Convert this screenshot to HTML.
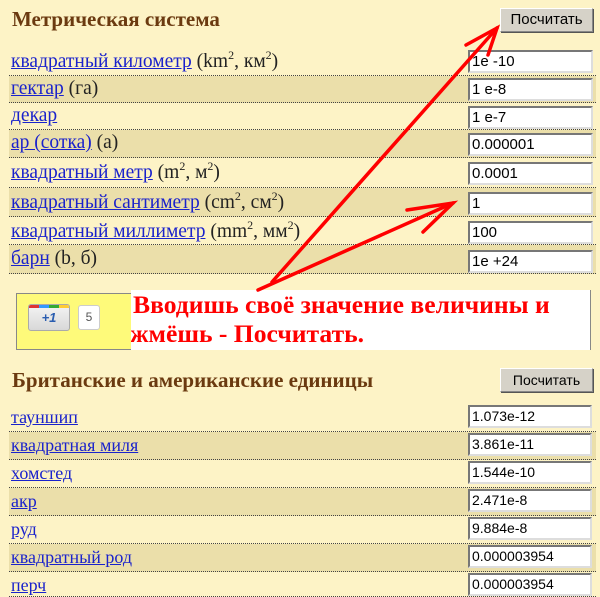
<!DOCTYPE html>
<html><head><meta charset="utf-8"><style>
*{margin:0;padding:0;box-sizing:border-box}
body{width:600px;height:597px;background:#fdf3c6;position:relative;overflow:hidden;font-family:"Liberation Serif","DejaVu Serif",serif}
.abs{position:absolute}
h1{position:absolute;color:#6b3a10;font-weight:bold;font-family:"Liberation Serif","DejaVu Serif",serif;white-space:nowrap}
.btn{position:absolute;background:#d6d2c8;border:1px solid #888;border-top-color:#fff;border-left-color:#fff;box-shadow:1px 1px 0 #555;font:14px "Liberation Sans",sans-serif;color:#000;text-align:center;line-height:22px}
.row{position:absolute;left:9px;width:587px;border-bottom:1px dotted #444}
.row.d{background:#ebdfaa}
.lbl{position:absolute;left:2px;font-size:19.5px;color:#222;white-space:nowrap}
.lbl a{color:#1a22cc;text-decoration:underline}
sup{font-size:12px;vertical-align:8px;line-height:0}
.inp{position:absolute;background:#fff;border:2px solid #777;border-right-color:#ddd;border-bottom-color:#ddd;font:15px "Liberation Sans",sans-serif;padding-left:2px;color:#000;line-height:19px}
.b2 .lbl{font-size:18px;letter-spacing:0}
</style></head><body>
<h1 style="left:12px;top:7px;font-size:21px">Метрическая система</h1>
<div class="btn" style="left:500px;top:8px;width:93px;height:24px;font-size:15px">Посчитать</div>

<div class="row" style="top:48px;height:28px"><div class="lbl" style="top:3px"><a>квадратный километр</a> (km<sup>2</sup>, км<sup>2</sup>)</div></div>
<div class="row d" style="top:76px;height:27px"><div class="lbl" style="top:2px"><a>гектар</a> (га)</div></div>
<div class="row" style="top:103px;height:27px"><div class="lbl" style="top:2px"><a>декар</a></div></div>
<div class="row d" style="top:130px;height:28px"><div class="lbl" style="top:2px"><a>ар (сотка)</a> (а)</div></div>
<div class="row" style="top:158px;height:30px"><div class="lbl" style="top:4px"><a>квадратный метр</a> (m<sup>2</sup>, м<sup>2</sup>)</div></div>
<div class="row d" style="top:188px;height:29px"><div class="lbl" style="top:4px"><a>квадратный сантиметр</a> (cm<sup>2</sup>, см<sup>2</sup>)</div></div>
<div class="row" style="top:217px;height:28px"><div class="lbl" style="top:4px"><a>квадратный миллиметр</a> (mm<sup>2</sup>, мм<sup>2</sup>)</div></div>
<div class="row d" style="top:245px;height:29px"><div class="lbl" style="top:3px"><a>барн</a> (b, б)</div></div>

<div class="inp" style="left:468px;top:50px;width:125px;height:23px">1e -10</div>
<div class="inp" style="left:468px;top:78px;width:125px;height:23px">1 e-8</div>
<div class="inp" style="left:468px;top:106px;width:125px;height:23px">1 e-7</div>
<div class="inp" style="left:468px;top:133px;width:125px;height:23px">0.000001</div>
<div class="inp" style="left:468px;top:162px;width:125px;height:23px">0.0001</div>
<div class="inp" style="left:468px;top:192px;width:125px;height:23px">1</div>
<div class="inp" style="left:468px;top:221px;width:125px;height:23px">100</div>
<div class="inp" style="left:468px;top:250px;width:125px;height:23px">1e +24</div>

<div class="abs" style="left:16px;top:293px;width:116px;height:57px;background:#fefa7a;border:1px solid #888"></div>
<div class="abs" style="left:28px;top:304px;width:42px;height:27px;background:linear-gradient(#f4f4f4,#d8d8d8);border:1px solid #aaa;border-radius:3px;overflow:hidden">
<div style="height:3px;background:linear-gradient(90deg,#d33 0 25%,#39f 25% 50%,#3a3 50% 75%,#fc3 75%)"></div>
<div style="font:bold italic 13px 'Liberation Sans',sans-serif;color:#2a5db0;text-align:center;line-height:20px">+1</div></div>
<div class="abs" style="left:78px;top:305px;width:22px;height:25px;background:#fff;border:1px solid #ccc;border-radius:3px;font:12px 'Liberation Sans',sans-serif;color:#555;text-align:center;line-height:23px">5</div>
<div class="abs" style="left:131px;top:290px;width:460px;height:60px;background:#fff;border-right:1px solid #888;color:#f00;font-weight:bold;font-size:25.6px;line-height:29px;padding-left:2px;white-space:nowrap;overflow:hidden">Вводишь своё значение величины и<br><span style="margin-left:-3px">жмёшь - Посчитать.</span></div>

<h1 style="left:12px;top:368px;font-size:21px">Британские и американские единицы</h1>
<div class="btn" style="left:500px;top:368px;width:93px;height:24px">Посчитать</div>

<div class="b2">
<div class="row" style="top:404px;height:28px"><div class="lbl" style="top:3px"><a>тауншип</a></div></div>
<div class="row d" style="top:432px;height:28px"><div class="lbl" style="top:3px"><a>квадратная миля</a></div></div>
<div class="row" style="top:460px;height:28px"><div class="lbl" style="top:3px"><a>хомстед</a></div></div>
<div class="row d" style="top:488px;height:28px"><div class="lbl" style="top:3px"><a>акр</a></div></div>
<div class="row" style="top:516px;height:28px"><div class="lbl" style="top:3px"><a>руд</a></div></div>
<div class="row d" style="top:544px;height:28px"><div class="lbl" style="top:3px"><a>квадратный род</a></div></div>
<div class="row" style="top:572px;height:25px"><div class="lbl" style="top:3px"><a>перч</a></div></div>
</div>
<div class="inp" style="left:468px;top:405px;width:124px;height:23px;font-size:14px">1.073e-12</div>
<div class="inp" style="left:468px;top:433px;width:124px;height:23px;font-size:14px">3.861e-11</div>
<div class="inp" style="left:468px;top:461px;width:124px;height:23px;font-size:14px">1.544e-10</div>
<div class="inp" style="left:468px;top:489px;width:124px;height:23px;font-size:14px">2.471e-8</div>
<div class="inp" style="left:468px;top:517px;width:124px;height:23px;font-size:14px">9.884e-8</div>
<div class="inp" style="left:468px;top:545px;width:124px;height:23px;font-size:14px">0.000003954</div>
<div class="inp" style="left:468px;top:573px;width:124px;height:23px;font-size:14px">0.000003954</div>

<svg class="abs" style="left:0;top:0" width="600" height="597" viewBox="0 0 600 597">
<g stroke="#f00" stroke-width="3.5" fill="none" stroke-linecap="round">
<path d="M272 282 L497 28"/>
<path d="M466 45 L497 28 L488 55"/>
<path d="M258 290 L453 203"/>
<path d="M407 210 L453 203 L423 232"/>
</g></svg>
</body></html>
